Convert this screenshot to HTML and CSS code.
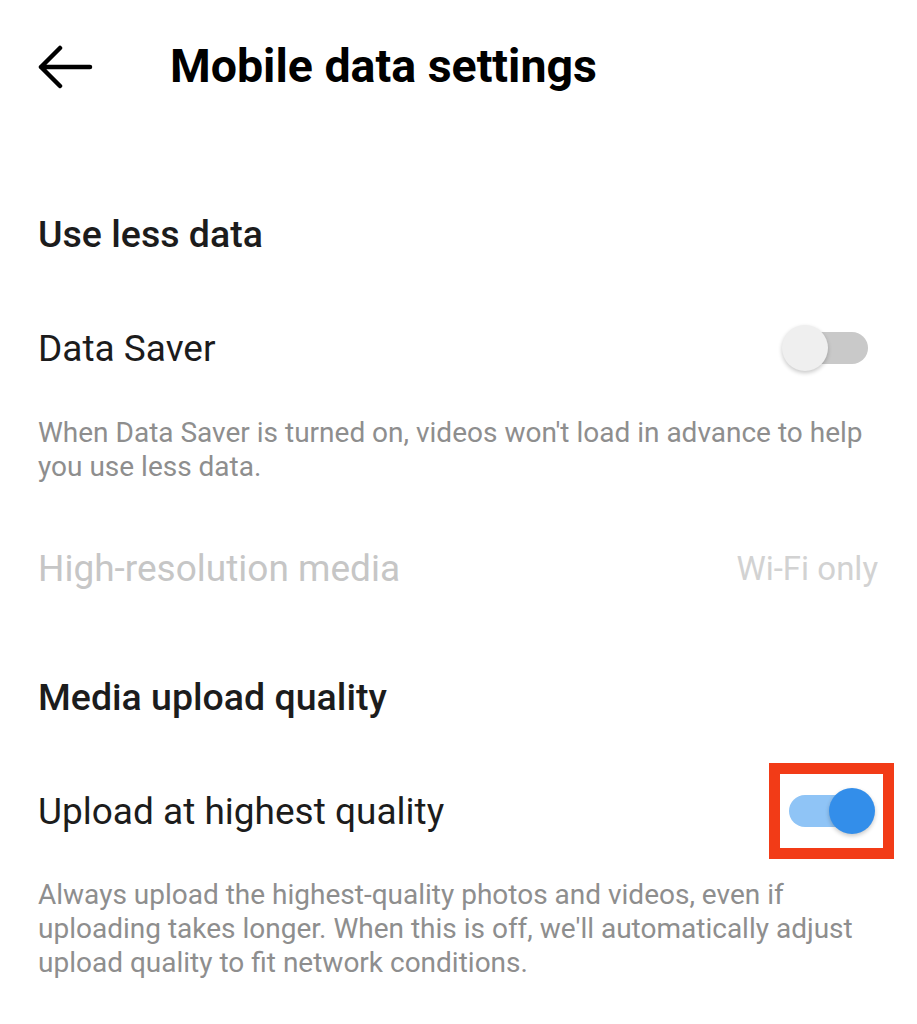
FILE: index.html
```html
<!DOCTYPE html>
<html>
<head>
<meta charset="utf-8">
<link rel="stylesheet" href="styles.css">
</head>
<body>
<div class="page">
  <header class="topbar">
    <svg class="back" width="56" height="44" viewBox="0 0 56 44">
      <path d="M52 22H3M22 3L3 22L22 41" fill="none" stroke="#000" stroke-width="4.5" stroke-linecap="round" stroke-linejoin="round"/>
    </svg>
    <h1 class="title">Mobile data settings</h1>
  </header>

  <h2 class="section">Use less data</h2>
  <div class="row">
    <span class="label">Data Saver</span>
    <span class="switch off"><span class="track"></span><span class="knob"></span></span>
  </div>
  <p class="desc">When Data Saver is turned on, videos won't load in advance to help you use less data.</p>

  <div class="row disabled">
    <span class="label">High-resolution media</span>
    <span class="value">Wi-Fi only</span>
  </div>

  <h2 class="section second">Media upload quality</h2>
  <div class="row upload">
    <span class="label">Upload at highest quality</span>
    <span class="highlight">
      <span class="switch on"><span class="track"></span><span class="knob"></span></span>
    </span>
  </div>
  <p class="desc">Always upload the highest-quality photos and videos, even if uploading takes longer. When this is off, we'll automatically adjust upload quality to fit network conditions.</p>
</div>
</body>
</html>
```

FILE: styles.css
```css
html, body {
  margin: 0;
  padding: 0;
  background: #fff;
}
body {
  font-family: Roboto, "Noto Sans", sans-serif;
  color: #1a1a1a;
  width: 917px;
  height: 1024px;
  overflow: hidden;
}
.page {
  padding: 0 39px 0 38px;
}
.topbar {
  display: flex;
  align-items: center;
  height: 132px;
}
.back {
  margin-right: 76px;
  flex: none;
  position: relative;
  top: 1px;
}
.title {
  margin: 0;
  font-size: 46.5px;
  font-weight: 700;
  color: #000;
}
.section {
  margin: 70px 0 0;
  font-size: 37.5px;
  font-weight: 500;
  line-height: 64px;
  color: #1c1c1c;
}
.section.second {
  margin-top: 42px;
}
.row {
  display: flex;
  align-items: center;
  justify-content: space-between;
  height: 110px;
  margin-top: 27px;
}
.row.disabled {
  margin-top: 29px;
}
.label {
  font-size: 37px;
  font-weight: 400;
  color: #1c1c1c;
}
.disabled .label {
  color: #c6c6c6;
}
.disabled .value {
  font-size: 33px;
  color: #d2d2d2;
}
.desc {
  margin: 13px 0 0;
  font-size: 28px;
  line-height: 34px;
  color: #8e8e8e;
}
.upload + .desc {
  margin-top: 12px;
}
.switch {
  position: relative;
  display: block;
  width: 86px;
  height: 48px;
}
.switch .track {
  position: absolute;
  top: 8px;
  width: 78px;
  height: 32px;
  border-radius: 16px;
}
.switch .knob {
  position: absolute;
  top: 1px;
  width: 46px;
  height: 46px;
  border-radius: 50%;
  box-shadow: 0 2px 4px rgba(0,0,0,0.22);
}
.switch.off {
  margin-right: 10px;
}
.switch.off .track {
  left: 8px;
  background: #c9c9c9;
}
.switch.off .knob {
  left: 0;
  background: #efefef;
}
.switch.on .track {
  left: 0;
  background: #8fc4f6;
}
.switch.on .knob {
  right: 0;
  background: #338eea;
}
.highlight {
  display: block;
  border: 11px solid #f23b17;
  padding: 13px 8px 13px 9px;
  margin-right: -16px;
}
```
